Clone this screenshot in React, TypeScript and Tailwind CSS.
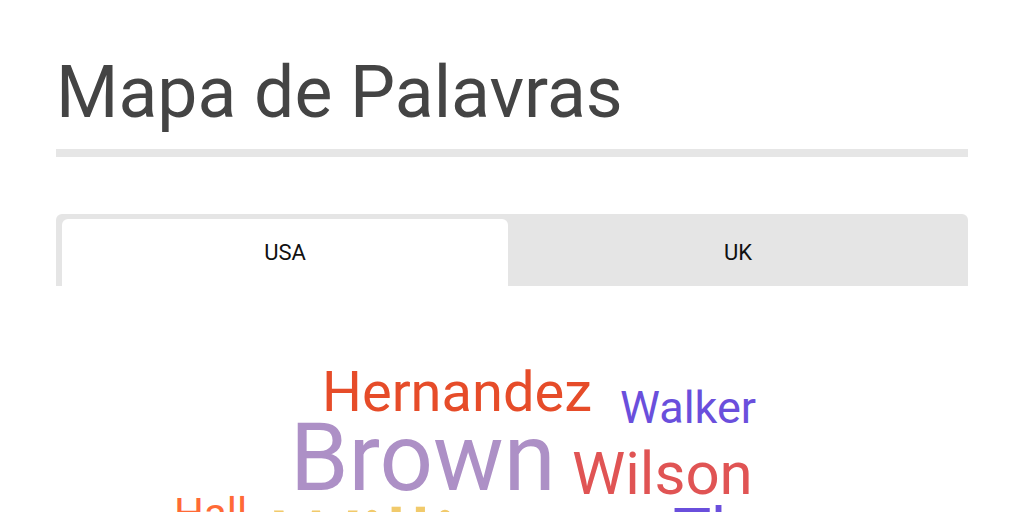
import { useState } from 'react';

type Word = { text: string; size: number; color: string; left: number; top: number };

// positions are the cloud layout itself, so they stay absolute
const usaWords: Word[] = [
  { text: 'Hernandez', size: 56, color: '#e64c29', left: 266, top: 78 },
  { text: 'Walker', size: 45, color: '#6a4fdc', left: 564, top: 99 },
  { text: 'Brown', size: 94, color: '#ad90c6', left: 234, top: 125 },
  { text: 'Wilson', size: 60, color: '#e05454', left: 516, top: 158 },
  { text: 'Hall', size: 42, color: '#ff6a36', left: 118, top: 207 },
  { text: 'Williams', size: 100, color: '#f1ca6b', left: 215, top: 212 },
  { text: 'Thomas', size: 64, color: '#6a4fdc', left: 617, top: 215 },
];

const ukWords: Word[] = [
  { text: 'Smith', size: 92, color: '#ad90c6', left: 260, top: 120 },
  { text: 'Jones', size: 56, color: '#e64c29', left: 300, top: 60 },
  { text: 'Taylor', size: 60, color: '#e05454', left: 520, top: 150 },
];

const App = () => {
  const [tab, setTab] = useState<'USA' | 'UK'>('USA');
  const words = tab === 'USA' ? usaWords : ukWords;

  return (
    <div className="bg-white min-h-[512px] px-14 pt-[57px] font-['Roboto',sans-serif]">
      <h1 className="text-[71.5px] leading-none text-[#444444] tracking-normal">Mapa de Palavras</h1>
      <div className="h-2 bg-[#e6e6e6] mt-[20px]"></div>

      <div className="mt-[57px] flex bg-[#e5e5e5] rounded-t-md pl-1.5 pt-[5px] h-[72px]">
        <button
          onClick={() => setTab('USA')}
          className={`w-[446px] rounded-t-md text-[22px] text-[#111] ${tab === 'USA' ? 'bg-white' : ''}`}
        >
          USA
        </button>
        <button
          onClick={() => setTab('UK')}
          className={`flex-1 rounded-t-md text-[22px] text-[#111] ${tab === 'UK' ? 'bg-white' : ''}`}
        >
          UK
        </button>
      </div>

      <div className="relative h-[320px] overflow-hidden">
        {words.map((w) => (
          <span
            key={w.text}
            className="absolute whitespace-nowrap leading-none"
            style={{ left: w.left, top: w.top, fontSize: w.size, color: w.color }}
          >
            {w.text}
          </span>
        ))}
      </div>
    </div>
  );
};

export default App;
